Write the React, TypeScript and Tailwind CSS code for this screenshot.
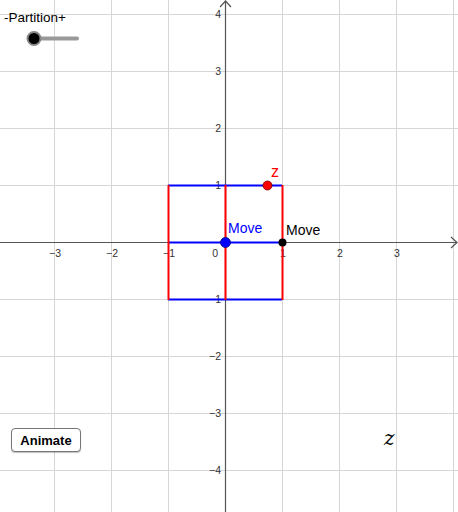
import React from "react";

const O = { x: 225, y: 242 };
const U = 57;
const X = (v: number) => O.x + v * U;
const Y = (v: number) => O.y - v * U;

export default function App() {
  const xs = [-3, -2, -1, 0, 1, 2, 3, 4];
  const ys = [-4, -3, -2, -1, 0, 1, 2, 3, 4];
  return (
    <div className="relative w-[458px] h-[512px] bg-white overflow-hidden font-['Liberation_Sans',Arial,sans-serif]">
      <svg className="absolute inset-0" width={458} height={512} viewBox="0 0 458 512">
        {xs.map((v) => (
          <line key={"gx" + v} x1={X(v) + 0.5} y1={0} x2={X(v) + 0.5} y2={512} stroke="#d6d6d6" strokeWidth={1} />
        ))}
        {ys.map((v) => (
          <line key={"gy" + v} x1={0} y1={Y(v) + 0.5} x2={458} y2={Y(v) + 0.5} stroke="#d6d6d6" strokeWidth={1} />
        ))}
        {/* axes */}
        <line x1={0} y1={O.y + 0.5} x2={457} y2={O.y + 0.5} stroke="#555" strokeWidth={1.2} />
        <polyline points={`451,${O.y - 5} 457,${O.y + 0.5} 451,${O.y + 6}`} fill="none" stroke="#555" strokeWidth={1.2} />
        <line x1={O.x + 0.5} y1={1} x2={O.x + 0.5} y2={512} stroke="#555" strokeWidth={1.2} />
        <polyline points={`${O.x - 5},7 ${O.x + 0.5},1 ${O.x + 6},7`} fill="none" stroke="#555" strokeWidth={1.2} />
        {/* tick labels */}
        <g fontSize={10.5} fill="#333" fontFamily="'Liberation Sans', Arial, sans-serif">
          {[-3, -2, -1, 1, 2, 3].map((v) => (
            <text key={"lx" + v} x={X(v) + 1} y={O.y + 15} textAnchor="middle">
              {v < 0 ? "\u2212" + Math.abs(v) : v}
            </text>
          ))}
          <text x={O.x - 7} y={O.y + 15} textAnchor="end">0</text>
          {[-4, -3, -2, -1, 1, 2, 3, 4].map((v) => (
            <text key={"ly" + v} x={O.x - 4} y={Y(v) + 4} textAnchor="end">
              {v < 0 ? "\u2212" + Math.abs(v) : v}
            </text>
          ))}
        </g>
        {/* blue horizontals */}
        {[1, 0, -1].map((v) => (
          <line key={"b" + v} x1={X(-1)} y1={Y(v) + 0.5} x2={X(1)} y2={Y(v) + 0.5} stroke="#0000ff" strokeWidth={2} />
        ))}
        {/* red verticals */}
        {[-1, 0, 1].map((v) => (
          <line key={"r" + v} x1={X(v) + 0.5} y1={Y(1)} x2={X(v) + 0.5} y2={Y(-1) + 1} stroke="#ff0000" strokeWidth={2} />
        ))}
        {/* points */}
        <circle cx={O.x + 0.5} cy={O.y + 0.5} r={5} fill="#0000ff" stroke="#00007a" strokeWidth={0.8} />
        <circle cx={X(1) + 0.5} cy={O.y + 0.5} r={4} fill="#000" />
        <circle cx={267.5} cy={185.5} r={4.5} fill="#ff0000" stroke="#7a0000" strokeWidth={0.8} />
        <g fontFamily="'Liberation Sans', Arial, sans-serif" fontSize={14}>
          <text x={228} y={233} fill="#0000ff">Move</text>
          <text x={286} y={235} fill="#000">Move</text>
        </g>
        <text x={271} y={177} fill="#ff0000" fontSize={16} fontFamily="'Liberation Sans', Arial, sans-serif">z</text>
        <text x={384} y={445} fontSize={20} fontStyle="italic" fontFamily="'DejaVu Serif', serif" fill="#000">z</text>
        {/* slider */}
        <line x1={34} y1={38.5} x2={77} y2={38.5} stroke="#999" strokeWidth={4} strokeLinecap="round" />
        <circle cx={34} cy={38.5} r={6.5} fill="#000" stroke="#888" strokeWidth={2} />
        <text x={4} y={22} fontSize={13.5} fill="#000" fontFamily="'Liberation Sans', Arial, sans-serif">-Partition+</text>
      </svg>
      <button className="absolute left-[11px] top-[428px] w-[70px] h-[24px] rounded-[4px] border border-[#777] bg-white text-[13px] font-bold text-black leading-none shadow-[0_1px_1px_rgba(0,0,0,0.25)]">
        Animate
      </button>
    </div>
  );
}
